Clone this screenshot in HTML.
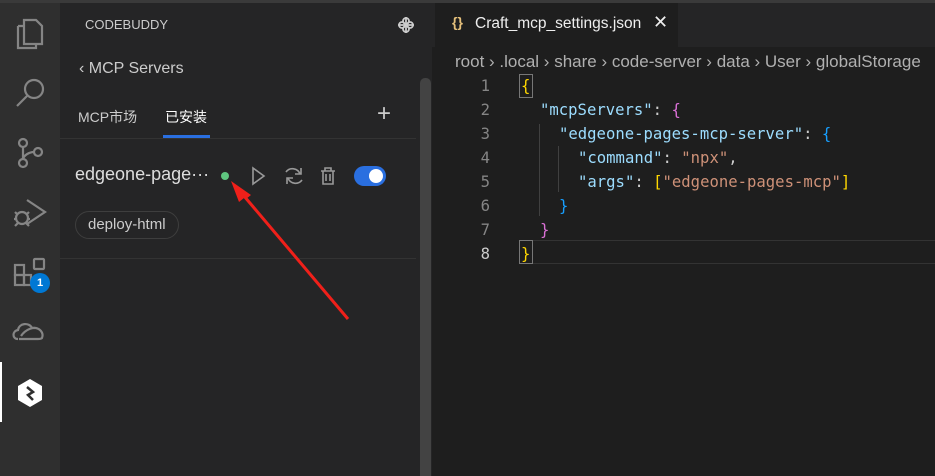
<!DOCTYPE html>
<html><head><meta charset="utf-8"><style>
*{margin:0;padding:0;box-sizing:border-box}
body{width:935px;height:476px;overflow:hidden;background:#1e1e1e;font-family:"Liberation Sans","Noto Sans CJK SC",sans-serif;position:relative}
.abs{position:absolute}
#top{left:0;top:0;width:935px;height:3px;background:#3a3a3a}
#act{left:0;top:3px;width:60px;height:473px;background:#2f2f2f}
#side{left:60px;top:3px;width:356px;height:473px;background:#252526}
#sb{left:416px;top:3px;width:16px;height:473px;background:#252526}
#sbt{left:420px;top:78px;width:11px;height:398px;background:#434343;border-radius:5px 5px 0 0}
#tabbar{left:432px;top:3px;width:503px;height:44px;background:#252526}
#tab{left:435px;top:3px;width:243px;height:44px;background:#1e1e1e}
.t{color:#ccc;white-space:nowrap}
.mono{font-family:"DejaVu Sans Mono","Liberation Mono",monospace;font-size:15.6px}
.ln{color:#858585;width:20px;text-align:right;left:470px}
</style></head><body>
<div id="top" class="abs"></div>
<div id="act" class="abs"></div>
<div id="side" class="abs"></div>
<div id="sb" class="abs"></div>
<div id="sbt" class="abs"></div>
<div id="tabbar" class="abs"></div>
<div id="tab" class="abs"></div>

<svg class="abs" style="left:0;top:0" width="60" height="476" fill="none" stroke="#858585" stroke-width="2.2">
<path d="M24 20h12l6 6v18H24z M18 26h6 M18 26v22h18v-4"/>
<circle cx="34" cy="89" r="9"/><path d="M27 96l-10 10"/>
<circle cx="23" cy="143" r="4"/><circle cx="23" cy="163" r="4"/><circle cx="38" cy="152" r="4"/><path d="M23 147v12 M34 152c-4 0-11 3-11 8"/>
<path d="M27 200l18 12-18 12" /><circle cx="22" cy="218" r="6"/><path d="M15 212l3 3M29 212l-3 3M14 219h3M27 219h3M15 226l3-3M29 226l-3-3"/>
<rect x="15" y="265" width="9" height="10"/><rect x="15" y="275" width="9" height="10"/><rect x="24" y="275" width="7" height="10"/><rect x="34" y="259" width="10" height="10" rx="1"/>
<path d="M18 339c-6 0-6-8 0-9c1-7 11-8 14-2c8-1 12 5 10 10c-1 1-3 1-4 1H19 M21 336c4-6 13-11 19-6"/>
</svg>
<div class="abs" style="left:30px;top:273px;width:20px;height:20px;border-radius:50%;background:#0078d4;color:#fff;font-size:11px;font-weight:bold;text-align:center;line-height:20px">1</div>
<div class="abs" style="left:0;top:362px;width:2px;height:60px;background:#fff"></div>
<svg class="abs" style="left:16px;top:378px" width="28" height="30"><path d="M14 1l12 7v14l-12 7-12-7V8z" fill="#fff"/><path d="M11 9l6 5-5 3 5 5" stroke="#2f2f2f" stroke-width="2.5" fill="none"/></svg>

<div class="abs t" style="left:85px;top:17px;font-size:13px">CODEBUDDY</div>
<svg class="abs" style="left:396px;top:15px" width="20" height="20" fill="none" stroke="#ccc" stroke-width="1.8"><path d="M10 2v16M2 10h16"/><circle cx="10" cy="6" r="3"/><circle cx="10" cy="14" r="3"/><circle cx="6" cy="10" r="3"/><circle cx="14" cy="10" r="3"/></svg>
<div class="abs t" style="left:79px;top:60px;font-size:16px">‹ MCP Servers</div>
<div class="abs t" style="left:78px;top:107px;font-size:14px">MCP市场</div>
<div class="abs" style="left:165px;top:107px;font-size:14px;color:#fff">已安装</div>
<div class="abs" style="left:163px;top:135px;width:47px;height:3px;background:#2a6fe0"></div>
<div class="abs" style="left:60px;top:138px;width:356px;height:1px;background:#333"></div>
<div class="abs t" style="left:377px;top:100px;font-size:24px;font-weight:300">+</div>
<div class="abs t" style="left:75px;top:164px;font-size:18px;color:#ddd">edgeone-page···</div>
<div class="abs" style="left:221px;top:172px;width:8px;height:8px;border-radius:50%;background:#5fc57f"></div>
<svg class="abs" style="left:250px;top:164px" width="140" height="24" fill="none" stroke="#999" stroke-width="1.6">
<path d="M3 4l11 8-11 8z"/>
<path d="M36 8a8 8 0 0 1 14 2 M51 4v6h-6 M52 16a8 8 0 0 1-14-2 M37 20v-6h6"/>
<path d="M71 7h14 M75 7V4h6v3 M73 7v13h10V7 M76 10v7 M80 10v7"/>
<rect x="104" y="2" width="32" height="20" rx="10" fill="#2a6fe0" stroke="none"/><circle cx="126" cy="12" r="7" fill="#fff" stroke="none"/>
</svg>
<div class="abs t" style="left:75px;top:211px;height:28px;padding:0 12px;border:1px solid #3e3e3e;border-radius:14px;font-size:15px;line-height:26px">deploy-html</div>
<div class="abs" style="left:60px;top:258px;width:356px;height:1px;background:#333"></div>

<div class="abs" style="left:452px;top:14px;color:#e5c07b;font-size:14px;font-weight:bold">{}</div>
<div class="abs t" style="left:475px;top:15px;font-size:15.5px;color:#eee">Craft_mcp_settings.json</div>
<div class="abs t" style="left:653px;top:12px;font-size:18px;color:#eee">✕</div>
<div class="abs t" style="left:455px;top:52px;font-size:17px;color:#b0b0b0">root ›&nbsp;.local ›&nbsp;share ›&nbsp;code-server ›&nbsp;data ›&nbsp;User ›&nbsp;globalStorage</div>

<div class="abs" style="left:519px;top:74px;width:14px;height:24px;border:1px solid #777"></div>
<div class="abs" style="left:519px;top:240px;width:416px;height:24px;border-top:1px solid #333;border-bottom:1px solid #333"></div>
<div class="abs" style="left:519px;top:240px;width:14px;height:24px;border:1px solid #777"></div>
<div class="abs" style="left:539px;top:124px;width:1px;height:92px;background:#404040"></div>
<div class="abs" style="left:558px;top:146px;width:1px;height:46px;background:#404040"></div>
<div class="abs mono ln" style="top:77px">1</div>
<div class="abs mono ln" style="top:101px">2</div>
<div class="abs mono ln" style="top:125px">3</div>
<div class="abs mono ln" style="top:149px">4</div>
<div class="abs mono ln" style="top:173px">5</div>
<div class="abs mono ln" style="top:197px">6</div>
<div class="abs mono ln" style="top:221px">7</div>
<div class="abs mono ln" style="top:245px;color:#ccc">8</div>
<div class="abs mono" style="left:521px;top:77px;color:#ffd700">{</div>
<div class="abs mono" style="left:540px;top:101px;color:#9cdcfe;white-space:pre">"mcpServers"<span style="color:#ccc">: </span><span style="color:#da70d6">{</span></div>
<div class="abs mono" style="left:559px;top:125px;color:#9cdcfe;white-space:pre">"edgeone-pages-mcp-server"<span style="color:#ccc">: </span><span style="color:#179fff">{</span></div>
<div class="abs mono" style="left:578px;top:149px;color:#9cdcfe;white-space:pre">"command"<span style="color:#ccc">: </span><span style="color:#ce9178">"npx"</span><span style="color:#ccc">,</span></div>
<div class="abs mono" style="left:578px;top:173px;color:#9cdcfe;white-space:pre">"args"<span style="color:#ccc">: </span><span style="color:#ffd700">[</span><span style="color:#ce9178">"edgeone-pages-mcp"</span><span style="color:#ffd700">]</span></div>
<div class="abs mono" style="left:559px;top:197px;color:#179fff">}</div>
<div class="abs mono" style="left:540px;top:221px;color:#da70d6">}</div>
<div class="abs mono" style="left:521px;top:245px;color:#ffd700">}</div>

<svg class="abs" style="left:0;top:0" width="935" height="476"><path d="M348 319L246 199l5-4-20-14 8 21 5-4z" fill="#f0201a"/><path d="M348 319L244 196" stroke="#f0201a" stroke-width="3"/></svg>
</body></html>
